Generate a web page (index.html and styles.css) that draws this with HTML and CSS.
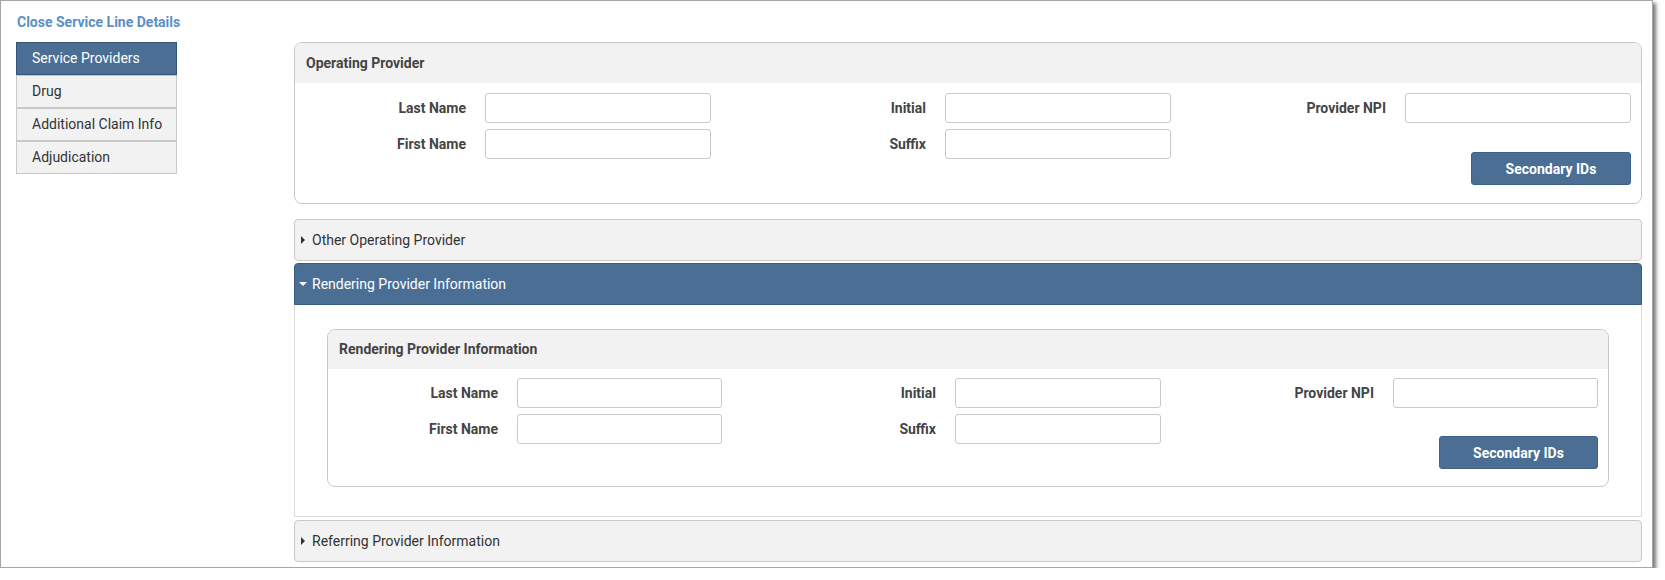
FILE: index.html
```html
<!DOCTYPE html>
<html>
<head>
<meta charset="utf-8">
<link rel="stylesheet" href="styles.css">
</head>
<body>
<div class="frame">
  <a class="close-link" href="#">Close Service Line Details</a>
  <div class="layout">
    <nav class="side-nav">
      <div class="nav-item active">Service Providers</div>
      <div class="nav-item">Drug</div>
      <div class="nav-item">Additional Claim Info</div>
      <div class="nav-item">Adjudication</div>
    </nav>
    <main class="main">
      <section class="panel panel-op">
        <div class="panel-head">Operating Provider</div>
        <div class="fields">
          <div class="fcol c1">
            <div class="frow"><label>Last Name</label><input type="text"></div>
            <div class="frow"><label>First Name</label><input type="text"></div>
          </div>
          <div class="fcol c2">
            <div class="frow"><label>Initial</label><input type="text"></div>
            <div class="frow"><label>Suffix</label><input type="text"></div>
          </div>
          <div class="fcol c3">
            <div class="frow"><label>Provider NPI</label><input type="text"></div>
            <button class="btn">Secondary IDs</button>
          </div>
        </div>
      </section>

      <div class="acc acc-first">
        <div class="acc-head"><span class="caret right"></span>Other Operating Provider</div>
      </div>

      <div class="acc acc-open">
        <div class="acc-head open"><span class="caret down"></span>Rendering Provider Information</div>
        <div class="acc-body">
          <section class="panel panel-inner">
            <div class="panel-head">Rendering Provider Information</div>
            <div class="fields">
              <div class="fcol c1">
                <div class="frow"><label>Last Name</label><input type="text"></div>
                <div class="frow"><label>First Name</label><input type="text"></div>
              </div>
              <div class="fcol c2">
                <div class="frow"><label>Initial</label><input type="text"></div>
                <div class="frow"><label>Suffix</label><input type="text"></div>
              </div>
              <div class="fcol c3">
                <div class="frow"><label>Provider NPI</label><input type="text"></div>
                <button class="btn">Secondary IDs</button>
              </div>
            </div>
          </section>
        </div>
      </div>

      <div class="acc acc-last">
        <div class="acc-head"><span class="caret right"></span>Referring Provider Information</div>
      </div>
    </main>
  </div>
</div>
</body>
</html>
```

FILE: styles.css
```css
html, body {
  margin: 0;
  padding: 0;
  background: #ffffff;
}
body {
  font-family: Roboto, "Liberation Sans", Arial, sans-serif;
  font-size: 14px;
  color: #333333;
}
.frame {
  box-sizing: border-box;
  width: 1653px;
  height: 568px;
  border: 1px solid #a6a6a6;
  background: #ffffff;
  box-shadow: 3px 3px 4px rgba(0, 0, 0, 0.55);
  padding: 13px 0 0 15px;
}
.close-link {
  display: block;
  width: max-content;
  margin-left: 1px;
  line-height: 16px;
  font-weight: 700;
  color: #5b8fc6;
  text-decoration: none;
}
.layout {
  display: flex;
  align-items: flex-start;
  margin-top: 12px;
}
.side-nav {
  width: 161px;
  display: flex;
  flex-direction: column;
}
.nav-item {
  box-sizing: border-box;
  height: 33px;
  line-height: 31px;
  padding-left: 15px;
  background: #f2f2f2;
  border: 1px solid #c9c9c9;
  color: #333333;
}
.nav-item.active {
  background: #4b6f94;
  border-color: #34557a;
  color: #ffffff;
}
.main {
  width: 1348px;
  margin-left: 117px;
}

/* panels */
.panel {
  border: 1px solid #c8c8c8;
  border-radius: 8px;
  overflow: hidden;
  background: #ffffff;
}
.panel-head {
  height: 40px;
  line-height: 40px;
  background: #f2f2f2;
  padding-left: 11px;
  font-weight: 700;
  color: #444444;
}
.fields {
  display: flex;
  padding: 10px 0 18px 0;
}
.fcol {
  display: flex;
  flex-direction: column;
  gap: 6px;
}
.frow {
  display: flex;
  align-items: center;
}
.frow label {
  box-sizing: border-box;
  text-align: right;
  padding-right: 19px;
  font-weight: 700;
  color: #444444;
}
.frow input {
  box-sizing: border-box;
  height: 30px;
  border: 1px solid #c9c9c9;
  border-radius: 3px;
  background: #ffffff;
  margin: 0;
  padding: 0 6px;
  font: inherit;
}
.btn {
  align-self: flex-end;
  box-sizing: border-box;
  width: 160px;
  height: 33px;
  margin-top: 23px;
  background: #4b6f94;
  border: 1px solid #3f6288;
  border-radius: 3px;
  color: #ffffff;
  font-family: inherit;
  font-size: 14px;
  font-weight: 700;
  padding: 0;
}

/* operating provider column sizes */
.panel-op .c1 label { width: 190px; }
.panel-op .c2 label,
.panel-op .c3 label { width: 234px; }
.panel-op input { width: 226px; }

/* inner rendering panel column sizes */
.panel-inner .panel-head { height: 39px; line-height: 39px; }
.panel-inner .fields { padding-top: 9px; padding-bottom: 17px; }
.panel-inner .c1 label { width: 189px; }
.panel-inner .c2 label { width: 233px; }
.panel-inner .c3 label { width: 232px; }
.panel-inner .c1 input,
.panel-inner .c3 input { width: 205px; }
.panel-inner .c2 input { width: 206px; }
.panel-inner .btn { width: 159px; margin-top: 22px; }

/* accordion */
.acc-first { margin-top: 15px; }
.acc-open { margin-top: 2px; }
.acc-last { margin-top: 3px; }
.acc-head {
  box-sizing: border-box;
  height: 42px;
  display: flex;
  align-items: center;
  padding-left: 4px;
  background: #f2f2f2;
  border: 1px solid #c9c9c9;
  border-radius: 4px;
  color: #333333;
}
.acc-head.open {
  background: #4b6f94;
  border-color: #3a5b80;
  border-radius: 4px 4px 0 0;
  color: #ffffff;
}
.caret {
  width: 8px;
  height: 8px;
  margin-right: 5px;
  position: relative;
}
.caret::after {
  content: "";
  position: absolute;
  width: 0;
  height: 0;
}
.caret.right::after {
  left: 2px;
  top: 0;
  border-top: 4px solid transparent;
  border-bottom: 4px solid transparent;
  border-left: 4px solid #333333;
}
.caret.down::after {
  left: 0;
  top: 2px;
  border-left: 4px solid transparent;
  border-right: 4px solid transparent;
  border-top: 4px solid #ffffff;
}
.acc-body {
  border: 1px solid #dcdcdc;
  border-top: 0;
  padding: 24px 32px 29px 32px;
}
```
